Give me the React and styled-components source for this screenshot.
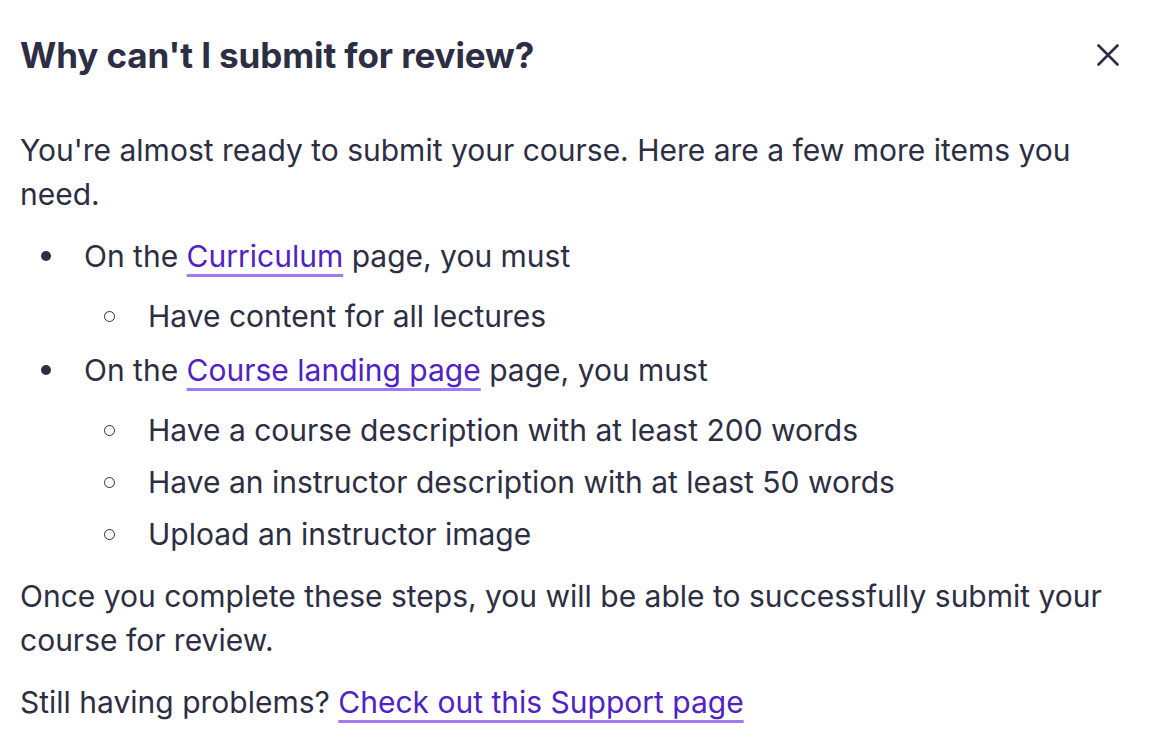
import React from "react";
import styled, { createGlobalStyle } from "styled-components";

const Global = createGlobalStyle`
  html, body { margin: 0; padding: 0; background: #ffffff; }
  body { font-family: Inter, "Noto Sans", sans-serif; color: #2d2e43; }
`;

const Modal = styled.div`
  width: 1158px;
  box-sizing: border-box;
  padding: 0 40px 0 20px;
`;

const Header = styled.div`
  display: flex;
  align-items: center;
  justify-content: space-between;
  height: 110px;
  margin-bottom: 18px;
`;

const Title = styled.h2`
  margin: 0;
  font-size: 35px;
  font-weight: 700;
  letter-spacing: -0.1px;
  color: #2d2e43;
`;

const CloseButton = styled.button`
  border: 0;
  background: none;
  padding: 0;
  width: 40px;
  height: 40px;
  display: flex;
  align-items: center;
  justify-content: center;
  color: #2d2e43;
  margin-right: -10px;
  cursor: pointer;
`;

const Body = styled.div`
  font-size: 30px;
  line-height: 44px;
`;

const Para = styled.p`
  margin: 0 0 ${(p) => p.$mb ?? 18}px;
`;

const List = styled.ul`
  margin: ${(p) => (p.$nested ? "16px 0 0" : "0 0 18px")};
  padding-left: 64px;
  list-style: none;
`;

const Item = styled.li`
  position: relative;
  margin-bottom: ${(p) => (p.$nested ? 8 : 10)}px;
  &:last-child { margin-bottom: 0; }
  &::before {
    content: "";
    position: absolute;
    box-sizing: border-box;
    top: 17px;
    left: ${(p) => (p.$nested ? -44 : -43)}px;
    width: ${(p) => (p.$nested ? 11 : 10)}px;
    height: ${(p) => (p.$nested ? 11 : 10)}px;
    border-radius: 50%;
    ${(p) =>
      p.$nested
        ? "border: 1.2px solid #2d2e43; background: transparent;"
        : "background: #2d2e43;"}
  }
`;

const Link = styled.a`
  color: #5022c3;
  text-decoration: underline;
  text-decoration-color: #a07af2;
  text-decoration-thickness: 3px;
  text-underline-offset: 7px;
`;

export default function App() {
  return (
    <>
      <Global />
      <Modal>
        <Header>
          <Title>Why can't I submit for review?</Title>
          <CloseButton aria-label="Close">
            <svg width="22" height="22" viewBox="0 0 22 22" fill="none">
              <path d="M1.5 1.5 L20.5 20.5 M20.5 1.5 L1.5 20.5" stroke="currentColor" strokeWidth="2.6" strokeLinecap="round" />
            </svg>
          </CloseButton>
        </Header>
        <Body>
          <Para>You're almost ready to submit your course. Here are a few more items you need.</Para>
          <List>
            <Item>
              On the <Link href="#">Curriculum</Link> page, you must
              <List $nested>
                <Item $nested>Have content for all lectures</Item>
              </List>
            </Item>
            <Item>
              On the <Link href="#">Course landing page</Link> page, you must
              <List $nested>
                <Item $nested>Have a course description with at least 200 words</Item>
                <Item $nested>Have an instructor description with at least 50 words</Item>
                <Item $nested>Upload an instructor image</Item>
              </List>
            </Item>
          </List>
          <Para>Once you complete these steps, you will be able to successfully submit your course for review.</Para>
          <Para $mb={0}>
            Still having problems? <Link href="#">Check out this Support page</Link>
          </Para>
        </Body>
      </Modal>
    </>
  );
}
